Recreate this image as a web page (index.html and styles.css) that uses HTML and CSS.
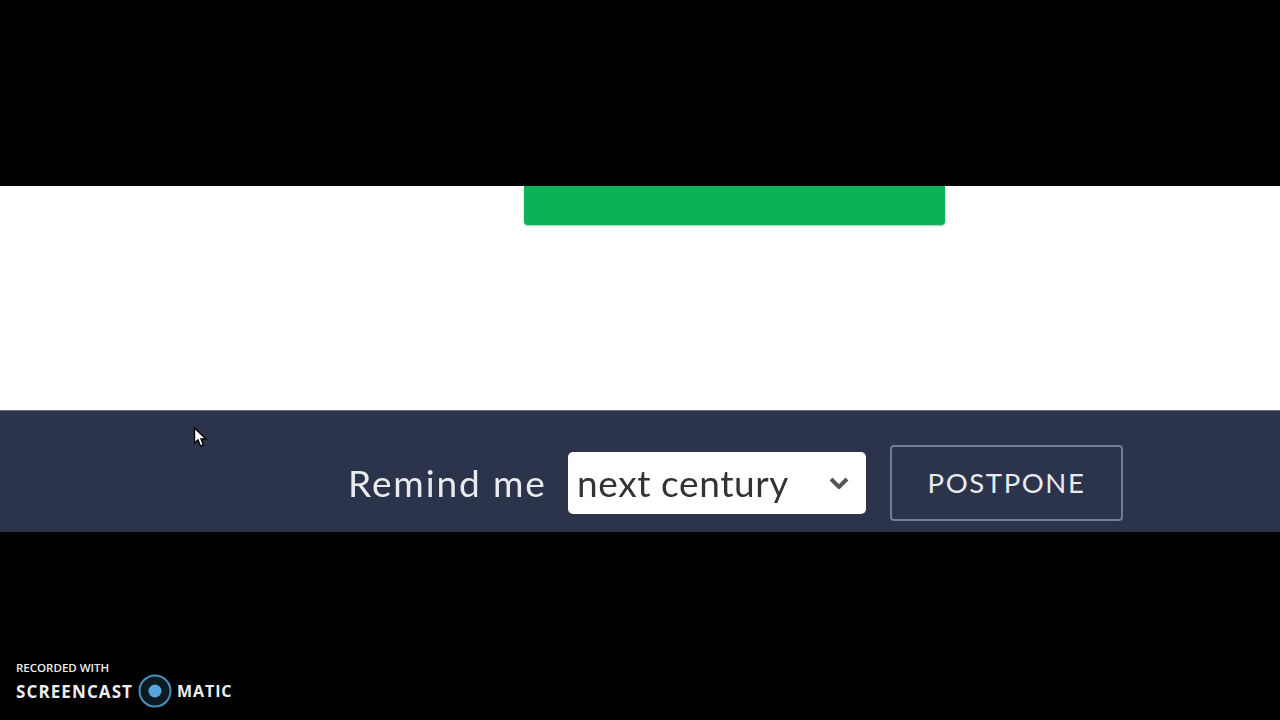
FILE: index.html
```html
<!DOCTYPE html>
<html lang="en">
<head>
    <meta charset="UTF-8">
    <title>Remind me</title>
    <link rel="stylesheet" href="styles.css">
</head>
<body>
    <div class="letterbox-top"></div>
    <div class="page">
        <div class="green-button"></div>
    </div>
    <div class="reminder-bar">
        <span class="reminder-label">Remind me</span>
        <div class="select-box">
            <span class="select-value">next century</span>
            <svg class="select-arrow" width="20" height="12" viewBox="0 0 20 12">
                <path d="M2 2 L10 10 L18 2" fill="none" stroke="#555" stroke-width="4"/>
            </svg>
        </div>
        <button class="postpone">POSTPONE</button>
    </div>
    <div class="letterbox-bottom"></div>

    <svg class="cursor" width="15" height="21" viewBox="0 0 15 21">
        <path d="M1.5 1 L1.5 16 L5 13 L7.5 19 L10.5 18 L8 12 L13 12 Z" fill="#fff" stroke="#000" stroke-width="1.4"/>
    </svg>

    <div class="watermark">
        <div class="watermark-small">RECORDED WITH</div>
        <div class="watermark-logo">
            <span>SCREENCAST</span>
            <svg class="watermark-icon" width="34" height="34" viewBox="0 0 34 34">
                <circle cx="17" cy="17" r="15.5" fill="#0d1a22" stroke="#4a90bd" stroke-width="2"/>
                <circle cx="17" cy="17" r="6.5" fill="#57a6de"/>
            </svg>
            <span class="watermark-matic">MATIC</span>
        </div>
    </div>
</body>
</html>
```

FILE: styles.css
```css
body {
    margin: 0;
    height: 720px;
    overflow: hidden;
    background-color: #000;
    font-family: 'Lato', sans-serif;
    display: flex;
    flex-direction: column;
}

.letterbox-top {
    height: 186px;
}

.page {
    height: 224px;
    background-color: #fff;
    padding-left: 524px;
}

.green-button {
    width: 421px;
    height: 39px;
    background-color: #0cb356;
    border-radius: 0 0 4px 4px;
    box-shadow: 0 1px 2px rgba(12, 120, 70, 0.4);
}

.reminder-bar {
    height: 122px;
    box-sizing: border-box;
    background-color: #2c344c;
    border-top: 1px solid #6b7080;
    padding-left: 348px;
    padding-top: 22px;
    display: flex;
    align-items: center;
    color: #e9ebee;
}

.reminder-label {
    font-size: 37px;
    letter-spacing: 1.9px;
    width: 220px;
    filter: blur(0.5px);
}

.select-box {
    width: 298px;
    height: 62px;
    box-sizing: border-box;
    background-color: #fff;
    border-radius: 5px;
    padding: 0 17px 0 9px;
    display: flex;
    align-items: center;
    justify-content: space-between;
    color: #333;
    font-size: 37px;
    letter-spacing: 0.6px;
}

.select-value {
    filter: blur(0.5px);
}

.postpone {
    width: 233px;
    height: 76px;
    margin-left: 24px;
    background: none;
    border: 2px solid #767d92;
    border-radius: 4px;
    color: #e9ebee;
    font-family: inherit;
    font-size: 27.5px;
    letter-spacing: 1.6px;
}

.letterbox-bottom {
    flex: 1;
}

.cursor {
    position: absolute;
    left: 193px;
    top: 427px;
}

.watermark {
    position: absolute;
    left: 16px;
    top: 660px;
    color: #eee;
    font-family: 'Open Sans', sans-serif;
    font-weight: 600;
}

.watermark-small {
    font-size: 11.5px;
    line-height: 16px;
}

.watermark-logo {
    display: flex;
    align-items: center;
    gap: 5px;
    font-size: 17px;
    font-weight: 700;
    letter-spacing: 1.1px;
    margin-top: -2px;
}

.watermark-icon {
    margin-left: 0;
}

.watermark-matic {
    font-size: 16px;
    letter-spacing: 0.9px;
}
```
